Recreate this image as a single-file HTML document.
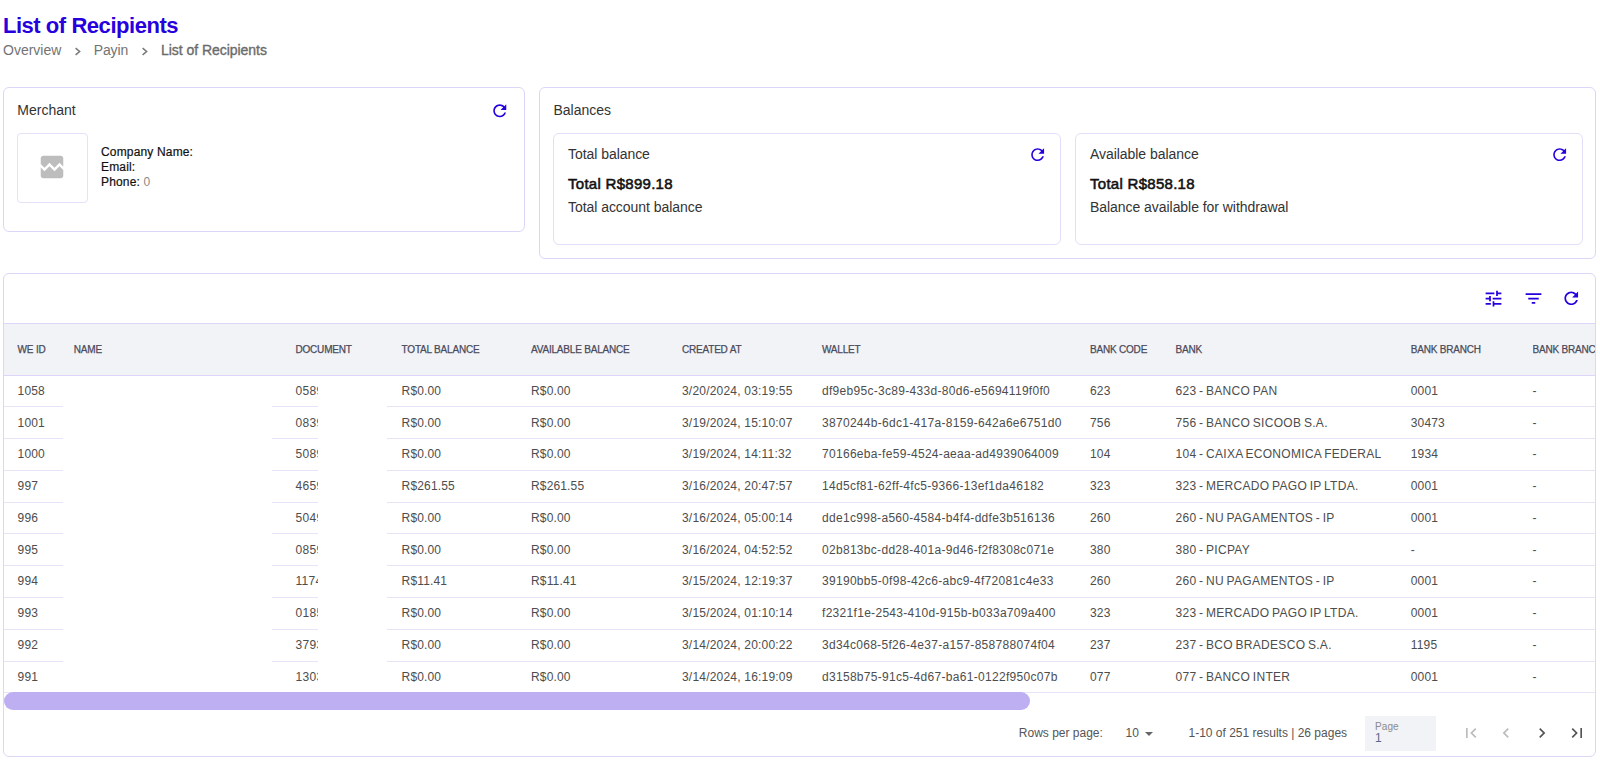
<!DOCTYPE html>
<html><head><meta charset="utf-8"><title>List of Recipients</title>
<style>
html,body{margin:0;padding:0;background:#fff;width:1600px;height:760px;overflow:hidden;position:relative}
body{font-family:'Liberation Sans', sans-serif}
.t{position:absolute;white-space:nowrap}
.b{position:absolute;box-sizing:border-box}
.i{position:absolute;overflow:visible}
</style></head><body>
<div class="t" style="left:2.9px;top:14.98px;font-size:22px;line-height:22px;font-weight:bold;color:#2700de;letter-spacing:-0.45px;">List of Recipients</div>
<div class="t" style="left:3px;top:42.95px;font-size:14px;line-height:14px;font-weight:normal;color:#737373;letter-spacing:0px;">Overview</div>
<div class="t" style="left:93.7px;top:42.95px;font-size:14px;line-height:14px;font-weight:normal;color:#737373;letter-spacing:-0.1px;">Payin</div>
<div class="t" style="left:161px;top:43.35px;font-size:14px;line-height:14px;font-weight:normal;color:#6b6b6b;letter-spacing:-0.04px;-webkit-text-stroke:0.35px #6b6b6b;">List of Recipients</div>
<svg class="i" style="left:73.5px;top:47px;width:8px;height:9px" viewBox="0 0 8 9"><path d="M1.6 1.2 5.6 4.5 1.6 7.8" fill="none" stroke="#777" stroke-width="1.5"/></svg>
<svg class="i" style="left:140.8px;top:47px;width:8px;height:9px" viewBox="0 0 8 9"><path d="M1.6 1.2 5.6 4.5 1.6 7.8" fill="none" stroke="#777" stroke-width="1.5"/></svg>
<div class="b" style="left:3px;top:87px;width:522px;height:145px;border:1px solid #ddd6f9;border-radius:6px;background:#fff;"></div>
<div class="t" style="left:17.3px;top:102.95px;font-size:14px;line-height:14px;font-weight:normal;color:#333;letter-spacing:0px;">Merchant</div>
<svg class="i" style="left:490.45px;top:100.55px;width:19.5px;height:19.5px" viewBox="0 0 24 24"><path fill="#2700de" d="M17.65 6.35C16.2 4.9 14.21 4 12 4c-4.42 0-7.99 3.58-7.99 8s3.57 8 7.99 8c3.73 0 6.84-2.55 7.73-6h-2.08c-.82 2.33-3.04 4-5.65 4-3.31 0-6-2.69-6-6s2.69-6 6-6c1.66 0 3.14.69 4.22 1.78L13 11h7V4l-2.35 2.35z"/></svg>
<div class="b" style="left:17px;top:133px;width:71px;height:70px;border:1px solid #e6e0fb;border-radius:4px;background:#fff;"></div>
<svg class="i" style="left:37.30px;top:152.00px;width:30px;height:30px" viewBox="0 0 24 24"><path fill="#bdbdbd" d="M21 5v6.59l-3-3.01-4 4.01-4-4-4 4-3-3.01V5c0-1.1.9-2 2-2h14c1.1 0 2 .9 2 2zm-3 6.42l3 3.01V19c0 1.1-.9 2-2 2H5c-1.1 0-2-.9-2-2v-6.58l3 2.99 4-4 4 4 4-3.99z"/></svg>
<div class="t" style="left:101px;top:145.84px;font-size:12px;line-height:12px;font-weight:normal;color:#111;letter-spacing:0.16px;-webkit-text-stroke:0.2px #111;">Company Name:</div>
<div class="t" style="left:101px;top:160.64px;font-size:12px;line-height:12px;font-weight:normal;color:#111;letter-spacing:0.16px;-webkit-text-stroke:0.2px #111;">Email: </div>
<div class="t" style="left:101px;top:176.14px;font-size:12px;line-height:12px;font-weight:normal;color:#111;letter-spacing:0.16px;-webkit-text-stroke:0.2px #111;">Phone: <span style="-webkit-text-stroke:0;color:#888">0</span></div>
<div class="b" style="left:539px;top:87px;width:1057px;height:172px;border:1px solid #ddd6f9;border-radius:6px;background:#fff;"></div>
<div class="t" style="left:553.5px;top:103.15px;font-size:14px;line-height:14px;font-weight:normal;color:#333;letter-spacing:0px;">Balances</div>
<div class="b" style="left:553px;top:133px;width:508px;height:112px;border:1px solid #e4defa;border-radius:6px;background:#fff;"></div>
<div class="t" style="left:568px;top:146.95px;font-size:14px;line-height:14px;font-weight:normal;color:#333;letter-spacing:-0.05px;">Total balance</div>
<div class="t" style="left:568px;top:176.30px;font-size:15px;line-height:15px;font-weight:normal;color:#111;letter-spacing:0.28px;-webkit-text-stroke:0.55px #111;">Total R$899.18</div>
<div class="t" style="left:568px;top:199.95px;font-size:14px;line-height:14px;font-weight:normal;color:#333;letter-spacing:-0.05px;">Total account balance</div>
<svg class="i" style="left:1027.55px;top:145.25px;width:19.3px;height:19.3px" viewBox="0 0 24 24"><path fill="#2700de" d="M17.65 6.35C16.2 4.9 14.21 4 12 4c-4.42 0-7.99 3.58-7.99 8s3.57 8 7.99 8c3.73 0 6.84-2.55 7.73-6h-2.08c-.82 2.33-3.04 4-5.65 4-3.31 0-6-2.69-6-6s2.69-6 6-6c1.66 0 3.14.69 4.22 1.78L13 11h7V4l-2.35 2.35z"/></svg>
<div class="b" style="left:1075px;top:133px;width:508px;height:112px;border:1px solid #e4defa;border-radius:6px;background:#fff;"></div>
<div class="t" style="left:1090px;top:146.95px;font-size:14px;line-height:14px;font-weight:normal;color:#333;letter-spacing:-0.05px;">Available balance</div>
<div class="t" style="left:1090px;top:176.30px;font-size:15px;line-height:15px;font-weight:normal;color:#111;letter-spacing:0.28px;-webkit-text-stroke:0.55px #111;">Total R$858.18</div>
<div class="t" style="left:1090px;top:199.95px;font-size:14px;line-height:14px;font-weight:normal;color:#333;letter-spacing:-0.05px;">Balance available for withdrawal</div>
<svg class="i" style="left:1549.55px;top:145.25px;width:19.3px;height:19.3px" viewBox="0 0 24 24"><path fill="#2700de" d="M17.65 6.35C16.2 4.9 14.21 4 12 4c-4.42 0-7.99 3.58-7.99 8s3.57 8 7.99 8c3.73 0 6.84-2.55 7.73-6h-2.08c-.82 2.33-3.04 4-5.65 4-3.31 0-6-2.69-6-6s2.69-6 6-6c1.66 0 3.14.69 4.22 1.78L13 11h7V4l-2.35 2.35z"/></svg>
<div class="b" style="left:3px;top:273px;width:1593px;height:484px;border:1px solid #ddd6f9;border-radius:6px;background:#fff;"></div>
<svg class="i" style="left:1483.40px;top:287.80px;width:21px;height:21px" viewBox="0 0 24 24"><path fill="#2700de" d="M3 17v2h6v-2H3zM3 5v2h10V5H3zm10 16v-2h8v-2h-8v-2h-2v6h2zM7 9v2H3v2h4v2h2V9H7zm14 4v-2H11v2h10zm-6-4h2V7h4V5h-4V3h-2v6z"/></svg>
<svg class="i" style="left:1522.70px;top:287.80px;width:21px;height:21px" viewBox="0 0 24 24"><path fill="#2700de" d="M10 18h4v-2h-4v2zM3 6v2h18V6H3zm3 7h12v-2H6v2z"/></svg>
<svg class="i" style="left:1561.05px;top:287.95px;width:20.5px;height:20.5px" viewBox="0 0 24 24"><path fill="#2700de" d="M17.65 6.35C16.2 4.9 14.21 4 12 4c-4.42 0-7.99 3.58-7.99 8s3.57 8 7.99 8c3.73 0 6.84-2.55 7.73-6h-2.08c-.82 2.33-3.04 4-5.65 4-3.31 0-6-2.69-6-6s2.69-6 6-6c1.66 0 3.14.69 4.22 1.78L13 11h7V4l-2.35 2.35z"/></svg>
<div class="b" style="left:4px;top:323px;width:1591px;height:53px;background:#f2f3f7;border-top:1px solid #ddd6f9;border-bottom:1px solid #ddd6f9;box-sizing:border-box"></div>
<div class="t" style="left:17.6px;top:345.34px;font-size:10px;line-height:10px;font-weight:normal;color:#4a4a5a;letter-spacing:-0.2px;-webkit-text-stroke:0.25px #4a4a5a;">WE ID</div>
<div class="t" style="left:73.8px;top:345.34px;font-size:10px;line-height:10px;font-weight:normal;color:#4a4a5a;letter-spacing:-0.2px;-webkit-text-stroke:0.25px #4a4a5a;">NAME</div>
<div class="t" style="left:295.5px;top:345.34px;font-size:10px;line-height:10px;font-weight:normal;color:#4a4a5a;letter-spacing:-0.2px;-webkit-text-stroke:0.25px #4a4a5a;">DOCUMENT</div>
<div class="t" style="left:401.6px;top:345.34px;font-size:10px;line-height:10px;font-weight:normal;color:#4a4a5a;letter-spacing:-0.2px;-webkit-text-stroke:0.25px #4a4a5a;">TOTAL BALANCE</div>
<div class="t" style="left:531px;top:345.34px;font-size:10px;line-height:10px;font-weight:normal;color:#4a4a5a;letter-spacing:-0.2px;-webkit-text-stroke:0.25px #4a4a5a;">AVAILABLE BALANCE</div>
<div class="t" style="left:682px;top:345.34px;font-size:10px;line-height:10px;font-weight:normal;color:#4a4a5a;letter-spacing:-0.2px;-webkit-text-stroke:0.25px #4a4a5a;">CREATED AT</div>
<div class="t" style="left:822px;top:345.34px;font-size:10px;line-height:10px;font-weight:normal;color:#4a4a5a;letter-spacing:-0.2px;-webkit-text-stroke:0.25px #4a4a5a;">WALLET</div>
<div class="t" style="left:1090px;top:345.34px;font-size:10px;line-height:10px;font-weight:normal;color:#4a4a5a;letter-spacing:-0.2px;-webkit-text-stroke:0.25px #4a4a5a;">BANK CODE</div>
<div class="t" style="left:1175.5px;top:345.34px;font-size:10px;line-height:10px;font-weight:normal;color:#4a4a5a;letter-spacing:-0.2px;-webkit-text-stroke:0.25px #4a4a5a;">BANK</div>
<div class="t" style="left:1410.8px;top:345.34px;font-size:10px;line-height:10px;font-weight:normal;color:#4a4a5a;letter-spacing:-0.2px;-webkit-text-stroke:0.25px #4a4a5a;">BANK BRANCH</div>
<div class="t" style="left:1532.5px;top:345.34px;font-size:10px;line-height:10px;font-weight:normal;color:#4a4a5a;letter-spacing:-0.2px;width:62.5px;overflow:hidden;-webkit-text-stroke:0.25px #4a4a5a;">BANK BRANCH</div>
<div class="b" style="left:4px;top:406.00px;width:1591px;height:1px;background:#e7e3f9"></div>
<div class="t" style="left:17.6px;top:384.84px;font-size:12px;line-height:12px;font-weight:normal;color:#4d4d4d;letter-spacing:0.15px;">1058</div>
<div class="t" style="left:295.5px;top:384.84px;font-size:12px;line-height:12px;font-weight:normal;color:#4d4d4d;letter-spacing:0.3px;">05890</div>
<div class="t" style="left:401.6px;top:384.84px;font-size:12px;line-height:12px;font-weight:normal;color:#4d4d4d;letter-spacing:0.15px;">R$0.00</div>
<div class="t" style="left:531px;top:384.84px;font-size:12px;line-height:12px;font-weight:normal;color:#4d4d4d;letter-spacing:0.15px;">R$0.00</div>
<div class="t" style="left:682px;top:384.84px;font-size:12px;line-height:12px;font-weight:normal;color:#4d4d4d;letter-spacing:0.2px;">3/20/2024, 03:19:55</div>
<div class="t" style="left:822px;top:384.84px;font-size:12px;line-height:12px;font-weight:normal;color:#4d4d4d;letter-spacing:0.3px;">df9eb95c-3c89-433d-80d6-e5694119f0f0</div>
<div class="t" style="left:1090px;top:384.84px;font-size:12px;line-height:12px;font-weight:normal;color:#4d4d4d;letter-spacing:0.15px;">623</div>
<div class="t" style="left:1175.5px;top:384.84px;font-size:12px;line-height:12px;font-weight:normal;color:#4d4d4d;letter-spacing:0.3px;word-spacing:-1px;">623 - BANCO PAN</div>
<div class="t" style="left:1410.8px;top:384.84px;font-size:12px;line-height:12px;font-weight:normal;color:#4d4d4d;letter-spacing:0.15px;">0001</div>
<div class="t" style="left:1532.5px;top:384.84px;font-size:12px;line-height:12px;font-weight:normal;color:#4d4d4d;letter-spacing:0px;">-</div>
<div class="b" style="left:4px;top:438.00px;width:1591px;height:1px;background:#e7e3f9"></div>
<div class="t" style="left:17.6px;top:416.59px;font-size:12px;line-height:12px;font-weight:normal;color:#4d4d4d;letter-spacing:0.15px;">1001</div>
<div class="t" style="left:295.5px;top:416.59px;font-size:12px;line-height:12px;font-weight:normal;color:#4d4d4d;letter-spacing:0.3px;">08390</div>
<div class="t" style="left:401.6px;top:416.59px;font-size:12px;line-height:12px;font-weight:normal;color:#4d4d4d;letter-spacing:0.15px;">R$0.00</div>
<div class="t" style="left:531px;top:416.59px;font-size:12px;line-height:12px;font-weight:normal;color:#4d4d4d;letter-spacing:0.15px;">R$0.00</div>
<div class="t" style="left:682px;top:416.59px;font-size:12px;line-height:12px;font-weight:normal;color:#4d4d4d;letter-spacing:0.2px;">3/19/2024, 15:10:07</div>
<div class="t" style="left:822px;top:416.59px;font-size:12px;line-height:12px;font-weight:normal;color:#4d4d4d;letter-spacing:0.3px;">3870244b-6dc1-417a-8159-642a6e6751d0</div>
<div class="t" style="left:1090px;top:416.59px;font-size:12px;line-height:12px;font-weight:normal;color:#4d4d4d;letter-spacing:0.15px;">756</div>
<div class="t" style="left:1175.5px;top:416.59px;font-size:12px;line-height:12px;font-weight:normal;color:#4d4d4d;letter-spacing:0.3px;word-spacing:-1px;">756 - BANCO SICOOB S.A.</div>
<div class="t" style="left:1410.8px;top:416.59px;font-size:12px;line-height:12px;font-weight:normal;color:#4d4d4d;letter-spacing:0.15px;">30473</div>
<div class="t" style="left:1532.5px;top:416.59px;font-size:12px;line-height:12px;font-weight:normal;color:#4d4d4d;letter-spacing:0px;">-</div>
<div class="b" style="left:4px;top:470.00px;width:1591px;height:1px;background:#e7e3f9"></div>
<div class="t" style="left:17.6px;top:448.34px;font-size:12px;line-height:12px;font-weight:normal;color:#4d4d4d;letter-spacing:0.15px;">1000</div>
<div class="t" style="left:295.5px;top:448.34px;font-size:12px;line-height:12px;font-weight:normal;color:#4d4d4d;letter-spacing:0.3px;">50890</div>
<div class="t" style="left:401.6px;top:448.34px;font-size:12px;line-height:12px;font-weight:normal;color:#4d4d4d;letter-spacing:0.15px;">R$0.00</div>
<div class="t" style="left:531px;top:448.34px;font-size:12px;line-height:12px;font-weight:normal;color:#4d4d4d;letter-spacing:0.15px;">R$0.00</div>
<div class="t" style="left:682px;top:448.34px;font-size:12px;line-height:12px;font-weight:normal;color:#4d4d4d;letter-spacing:0.2px;">3/19/2024, 14:11:32</div>
<div class="t" style="left:822px;top:448.34px;font-size:12px;line-height:12px;font-weight:normal;color:#4d4d4d;letter-spacing:0.3px;">70166eba-fe59-4524-aeaa-ad4939064009</div>
<div class="t" style="left:1090px;top:448.34px;font-size:12px;line-height:12px;font-weight:normal;color:#4d4d4d;letter-spacing:0.15px;">104</div>
<div class="t" style="left:1175.5px;top:448.34px;font-size:12px;line-height:12px;font-weight:normal;color:#4d4d4d;letter-spacing:0.3px;word-spacing:-1px;">104 - CAIXA ECONOMICA FEDERAL</div>
<div class="t" style="left:1410.8px;top:448.34px;font-size:12px;line-height:12px;font-weight:normal;color:#4d4d4d;letter-spacing:0.15px;">1934</div>
<div class="t" style="left:1532.5px;top:448.34px;font-size:12px;line-height:12px;font-weight:normal;color:#4d4d4d;letter-spacing:0px;">-</div>
<div class="b" style="left:4px;top:502.00px;width:1591px;height:1px;background:#e7e3f9"></div>
<div class="t" style="left:17.6px;top:480.09px;font-size:12px;line-height:12px;font-weight:normal;color:#4d4d4d;letter-spacing:0.15px;">997</div>
<div class="t" style="left:295.5px;top:480.09px;font-size:12px;line-height:12px;font-weight:normal;color:#4d4d4d;letter-spacing:0.3px;">46590</div>
<div class="t" style="left:401.6px;top:480.09px;font-size:12px;line-height:12px;font-weight:normal;color:#4d4d4d;letter-spacing:0.15px;">R$261.55</div>
<div class="t" style="left:531px;top:480.09px;font-size:12px;line-height:12px;font-weight:normal;color:#4d4d4d;letter-spacing:0.15px;">R$261.55</div>
<div class="t" style="left:682px;top:480.09px;font-size:12px;line-height:12px;font-weight:normal;color:#4d4d4d;letter-spacing:0.2px;">3/16/2024, 20:47:57</div>
<div class="t" style="left:822px;top:480.09px;font-size:12px;line-height:12px;font-weight:normal;color:#4d4d4d;letter-spacing:0.3px;">14d5cf81-62ff-4fc5-9366-13ef1da46182</div>
<div class="t" style="left:1090px;top:480.09px;font-size:12px;line-height:12px;font-weight:normal;color:#4d4d4d;letter-spacing:0.15px;">323</div>
<div class="t" style="left:1175.5px;top:480.09px;font-size:12px;line-height:12px;font-weight:normal;color:#4d4d4d;letter-spacing:0.3px;word-spacing:-1px;">323 - MERCADO PAGO IP LTDA.</div>
<div class="t" style="left:1410.8px;top:480.09px;font-size:12px;line-height:12px;font-weight:normal;color:#4d4d4d;letter-spacing:0.15px;">0001</div>
<div class="t" style="left:1532.5px;top:480.09px;font-size:12px;line-height:12px;font-weight:normal;color:#4d4d4d;letter-spacing:0px;">-</div>
<div class="b" style="left:4px;top:533.00px;width:1591px;height:1px;background:#e7e3f9"></div>
<div class="t" style="left:17.6px;top:511.84px;font-size:12px;line-height:12px;font-weight:normal;color:#4d4d4d;letter-spacing:0.15px;">996</div>
<div class="t" style="left:295.5px;top:511.84px;font-size:12px;line-height:12px;font-weight:normal;color:#4d4d4d;letter-spacing:0.3px;">50490</div>
<div class="t" style="left:401.6px;top:511.84px;font-size:12px;line-height:12px;font-weight:normal;color:#4d4d4d;letter-spacing:0.15px;">R$0.00</div>
<div class="t" style="left:531px;top:511.84px;font-size:12px;line-height:12px;font-weight:normal;color:#4d4d4d;letter-spacing:0.15px;">R$0.00</div>
<div class="t" style="left:682px;top:511.84px;font-size:12px;line-height:12px;font-weight:normal;color:#4d4d4d;letter-spacing:0.2px;">3/16/2024, 05:00:14</div>
<div class="t" style="left:822px;top:511.84px;font-size:12px;line-height:12px;font-weight:normal;color:#4d4d4d;letter-spacing:0.3px;">dde1c998-a560-4584-b4f4-ddfe3b516136</div>
<div class="t" style="left:1090px;top:511.84px;font-size:12px;line-height:12px;font-weight:normal;color:#4d4d4d;letter-spacing:0.15px;">260</div>
<div class="t" style="left:1175.5px;top:511.84px;font-size:12px;line-height:12px;font-weight:normal;color:#4d4d4d;letter-spacing:0.3px;word-spacing:-1px;">260 - NU PAGAMENTOS - IP</div>
<div class="t" style="left:1410.8px;top:511.84px;font-size:12px;line-height:12px;font-weight:normal;color:#4d4d4d;letter-spacing:0.15px;">0001</div>
<div class="t" style="left:1532.5px;top:511.84px;font-size:12px;line-height:12px;font-weight:normal;color:#4d4d4d;letter-spacing:0px;">-</div>
<div class="b" style="left:4px;top:565.00px;width:1591px;height:1px;background:#e7e3f9"></div>
<div class="t" style="left:17.6px;top:543.59px;font-size:12px;line-height:12px;font-weight:normal;color:#4d4d4d;letter-spacing:0.15px;">995</div>
<div class="t" style="left:295.5px;top:543.59px;font-size:12px;line-height:12px;font-weight:normal;color:#4d4d4d;letter-spacing:0.3px;">08590</div>
<div class="t" style="left:401.6px;top:543.59px;font-size:12px;line-height:12px;font-weight:normal;color:#4d4d4d;letter-spacing:0.15px;">R$0.00</div>
<div class="t" style="left:531px;top:543.59px;font-size:12px;line-height:12px;font-weight:normal;color:#4d4d4d;letter-spacing:0.15px;">R$0.00</div>
<div class="t" style="left:682px;top:543.59px;font-size:12px;line-height:12px;font-weight:normal;color:#4d4d4d;letter-spacing:0.2px;">3/16/2024, 04:52:52</div>
<div class="t" style="left:822px;top:543.59px;font-size:12px;line-height:12px;font-weight:normal;color:#4d4d4d;letter-spacing:0.3px;">02b813bc-dd28-401a-9d46-f2f8308c071e</div>
<div class="t" style="left:1090px;top:543.59px;font-size:12px;line-height:12px;font-weight:normal;color:#4d4d4d;letter-spacing:0.15px;">380</div>
<div class="t" style="left:1175.5px;top:543.59px;font-size:12px;line-height:12px;font-weight:normal;color:#4d4d4d;letter-spacing:0.3px;word-spacing:-1px;">380 - PICPAY</div>
<div class="t" style="left:1410.8px;top:543.59px;font-size:12px;line-height:12px;font-weight:normal;color:#4d4d4d;letter-spacing:0.15px;">-</div>
<div class="t" style="left:1532.5px;top:543.59px;font-size:12px;line-height:12px;font-weight:normal;color:#4d4d4d;letter-spacing:0px;">-</div>
<div class="b" style="left:4px;top:597.00px;width:1591px;height:1px;background:#e7e3f9"></div>
<div class="t" style="left:17.6px;top:575.34px;font-size:12px;line-height:12px;font-weight:normal;color:#4d4d4d;letter-spacing:0.15px;">994</div>
<div class="t" style="left:295.5px;top:575.34px;font-size:12px;line-height:12px;font-weight:normal;color:#4d4d4d;letter-spacing:0.3px;">11740</div>
<div class="t" style="left:401.6px;top:575.34px;font-size:12px;line-height:12px;font-weight:normal;color:#4d4d4d;letter-spacing:0.15px;">R$11.41</div>
<div class="t" style="left:531px;top:575.34px;font-size:12px;line-height:12px;font-weight:normal;color:#4d4d4d;letter-spacing:0.15px;">R$11.41</div>
<div class="t" style="left:682px;top:575.34px;font-size:12px;line-height:12px;font-weight:normal;color:#4d4d4d;letter-spacing:0.2px;">3/15/2024, 12:19:37</div>
<div class="t" style="left:822px;top:575.34px;font-size:12px;line-height:12px;font-weight:normal;color:#4d4d4d;letter-spacing:0.3px;">39190bb5-0f98-42c6-abc9-4f72081c4e33</div>
<div class="t" style="left:1090px;top:575.34px;font-size:12px;line-height:12px;font-weight:normal;color:#4d4d4d;letter-spacing:0.15px;">260</div>
<div class="t" style="left:1175.5px;top:575.34px;font-size:12px;line-height:12px;font-weight:normal;color:#4d4d4d;letter-spacing:0.3px;word-spacing:-1px;">260 - NU PAGAMENTOS - IP</div>
<div class="t" style="left:1410.8px;top:575.34px;font-size:12px;line-height:12px;font-weight:normal;color:#4d4d4d;letter-spacing:0.15px;">0001</div>
<div class="t" style="left:1532.5px;top:575.34px;font-size:12px;line-height:12px;font-weight:normal;color:#4d4d4d;letter-spacing:0px;">-</div>
<div class="b" style="left:4px;top:629.00px;width:1591px;height:1px;background:#e7e3f9"></div>
<div class="t" style="left:17.6px;top:607.09px;font-size:12px;line-height:12px;font-weight:normal;color:#4d4d4d;letter-spacing:0.15px;">993</div>
<div class="t" style="left:295.5px;top:607.09px;font-size:12px;line-height:12px;font-weight:normal;color:#4d4d4d;letter-spacing:0.3px;">01850</div>
<div class="t" style="left:401.6px;top:607.09px;font-size:12px;line-height:12px;font-weight:normal;color:#4d4d4d;letter-spacing:0.15px;">R$0.00</div>
<div class="t" style="left:531px;top:607.09px;font-size:12px;line-height:12px;font-weight:normal;color:#4d4d4d;letter-spacing:0.15px;">R$0.00</div>
<div class="t" style="left:682px;top:607.09px;font-size:12px;line-height:12px;font-weight:normal;color:#4d4d4d;letter-spacing:0.2px;">3/15/2024, 01:10:14</div>
<div class="t" style="left:822px;top:607.09px;font-size:12px;line-height:12px;font-weight:normal;color:#4d4d4d;letter-spacing:0.3px;">f2321f1e-2543-410d-915b-b033a709a400</div>
<div class="t" style="left:1090px;top:607.09px;font-size:12px;line-height:12px;font-weight:normal;color:#4d4d4d;letter-spacing:0.15px;">323</div>
<div class="t" style="left:1175.5px;top:607.09px;font-size:12px;line-height:12px;font-weight:normal;color:#4d4d4d;letter-spacing:0.3px;word-spacing:-1px;">323 - MERCADO PAGO IP LTDA.</div>
<div class="t" style="left:1410.8px;top:607.09px;font-size:12px;line-height:12px;font-weight:normal;color:#4d4d4d;letter-spacing:0.15px;">0001</div>
<div class="t" style="left:1532.5px;top:607.09px;font-size:12px;line-height:12px;font-weight:normal;color:#4d4d4d;letter-spacing:0px;">-</div>
<div class="b" style="left:4px;top:661.00px;width:1591px;height:1px;background:#e7e3f9"></div>
<div class="t" style="left:17.6px;top:638.84px;font-size:12px;line-height:12px;font-weight:normal;color:#4d4d4d;letter-spacing:0.15px;">992</div>
<div class="t" style="left:295.5px;top:638.84px;font-size:12px;line-height:12px;font-weight:normal;color:#4d4d4d;letter-spacing:0.3px;">37930</div>
<div class="t" style="left:401.6px;top:638.84px;font-size:12px;line-height:12px;font-weight:normal;color:#4d4d4d;letter-spacing:0.15px;">R$0.00</div>
<div class="t" style="left:531px;top:638.84px;font-size:12px;line-height:12px;font-weight:normal;color:#4d4d4d;letter-spacing:0.15px;">R$0.00</div>
<div class="t" style="left:682px;top:638.84px;font-size:12px;line-height:12px;font-weight:normal;color:#4d4d4d;letter-spacing:0.2px;">3/14/2024, 20:00:22</div>
<div class="t" style="left:822px;top:638.84px;font-size:12px;line-height:12px;font-weight:normal;color:#4d4d4d;letter-spacing:0.3px;">3d34c068-5f26-4e37-a157-858788074f04</div>
<div class="t" style="left:1090px;top:638.84px;font-size:12px;line-height:12px;font-weight:normal;color:#4d4d4d;letter-spacing:0.15px;">237</div>
<div class="t" style="left:1175.5px;top:638.84px;font-size:12px;line-height:12px;font-weight:normal;color:#4d4d4d;letter-spacing:0.3px;word-spacing:-1px;">237 - BCO BRADESCO S.A.</div>
<div class="t" style="left:1410.8px;top:638.84px;font-size:12px;line-height:12px;font-weight:normal;color:#4d4d4d;letter-spacing:0.15px;">1195</div>
<div class="t" style="left:1532.5px;top:638.84px;font-size:12px;line-height:12px;font-weight:normal;color:#4d4d4d;letter-spacing:0px;">-</div>
<div class="b" style="left:4px;top:692.00px;width:1591px;height:1px;background:#e7e3f9"></div>
<div class="t" style="left:17.6px;top:670.59px;font-size:12px;line-height:12px;font-weight:normal;color:#4d4d4d;letter-spacing:0.15px;">991</div>
<div class="t" style="left:295.5px;top:670.59px;font-size:12px;line-height:12px;font-weight:normal;color:#4d4d4d;letter-spacing:0.3px;">13030</div>
<div class="t" style="left:401.6px;top:670.59px;font-size:12px;line-height:12px;font-weight:normal;color:#4d4d4d;letter-spacing:0.15px;">R$0.00</div>
<div class="t" style="left:531px;top:670.59px;font-size:12px;line-height:12px;font-weight:normal;color:#4d4d4d;letter-spacing:0.15px;">R$0.00</div>
<div class="t" style="left:682px;top:670.59px;font-size:12px;line-height:12px;font-weight:normal;color:#4d4d4d;letter-spacing:0.2px;">3/14/2024, 16:19:09</div>
<div class="t" style="left:822px;top:670.59px;font-size:12px;line-height:12px;font-weight:normal;color:#4d4d4d;letter-spacing:0.3px;">d3158b75-91c5-4d67-ba61-0122f950c07b</div>
<div class="t" style="left:1090px;top:670.59px;font-size:12px;line-height:12px;font-weight:normal;color:#4d4d4d;letter-spacing:0.15px;">077</div>
<div class="t" style="left:1175.5px;top:670.59px;font-size:12px;line-height:12px;font-weight:normal;color:#4d4d4d;letter-spacing:0.3px;word-spacing:-1px;">077 - BANCO INTER</div>
<div class="t" style="left:1410.8px;top:670.59px;font-size:12px;line-height:12px;font-weight:normal;color:#4d4d4d;letter-spacing:0.15px;">0001</div>
<div class="t" style="left:1532.5px;top:670.59px;font-size:12px;line-height:12px;font-weight:normal;color:#4d4d4d;letter-spacing:0px;">-</div>
<div class="b" style="left:62.5px;top:376px;width:209.5px;height:317px;background:#fff"></div>
<div class="b" style="left:317.5px;top:376px;width:69.5px;height:317px;background:#fff"></div>
<div class="b" style="left:4px;top:692px;width:1026px;height:17.5px;background:#bdaff2;border-radius:9px"></div>
<div class="t" style="left:1018.8px;top:726.64px;font-size:12px;line-height:12px;font-weight:normal;color:#555;letter-spacing:0px;">Rows per page:</div>
<div class="t" style="left:1125.5px;top:726.64px;font-size:12px;line-height:12px;font-weight:normal;color:#555;letter-spacing:0px;">10</div>
<svg class="i" style="left:1143px;top:730px;width:12px;height:8px" viewBox="0 0 12 8"><path d="M2 2h8l-4 4z" fill="#666"/></svg>
<div class="t" style="left:1188.5px;top:726.64px;font-size:12px;line-height:12px;font-weight:normal;color:#555;letter-spacing:0px;">1-10 of 251 results | 26 pages</div>
<div class="b" style="left:1365px;top:716px;width:71px;height:35px;background:#f2f3f7;border-radius:0"></div>
<div class="t" style="left:1375px;top:722.33px;font-size:10px;line-height:10px;font-weight:normal;color:#8a8a8a;letter-spacing:0.1px;">Page</div>
<div class="t" style="left:1375px;top:731.84px;font-size:12px;line-height:12px;font-weight:normal;color:#5a6a90;letter-spacing:0px;">1</div>
<svg class="i" style="left:1461.40px;top:723.00px;width:20px;height:20px" viewBox="0 0 24 24"><path fill="#bbb" d="M18.41 16.59L13.82 12l4.59-4.59L17 6l-6 6 6 6zM6 6h2v12H6z"/></svg>
<svg class="i" style="left:1496.40px;top:723.00px;width:20px;height:20px" viewBox="0 0 24 24"><path fill="#bbb" d="M15.41 7.41L14 6l-6 6 6 6 1.41-1.41L10.83 12z"/></svg>
<svg class="i" style="left:1531.80px;top:723.00px;width:20px;height:20px" viewBox="0 0 24 24"><path fill="#555" d="M10 6L8.59 7.41 13.17 12l-4.58 4.59L10 18l6-6z"/></svg>
<svg class="i" style="left:1567.20px;top:723.00px;width:20px;height:20px" viewBox="0 0 24 24"><path fill="#555" d="M5.59 7.41L10.18 12l-4.59 4.59L7 18l6-6-6-6zM16 6h2v12h-2z"/></svg>
</body></html>
